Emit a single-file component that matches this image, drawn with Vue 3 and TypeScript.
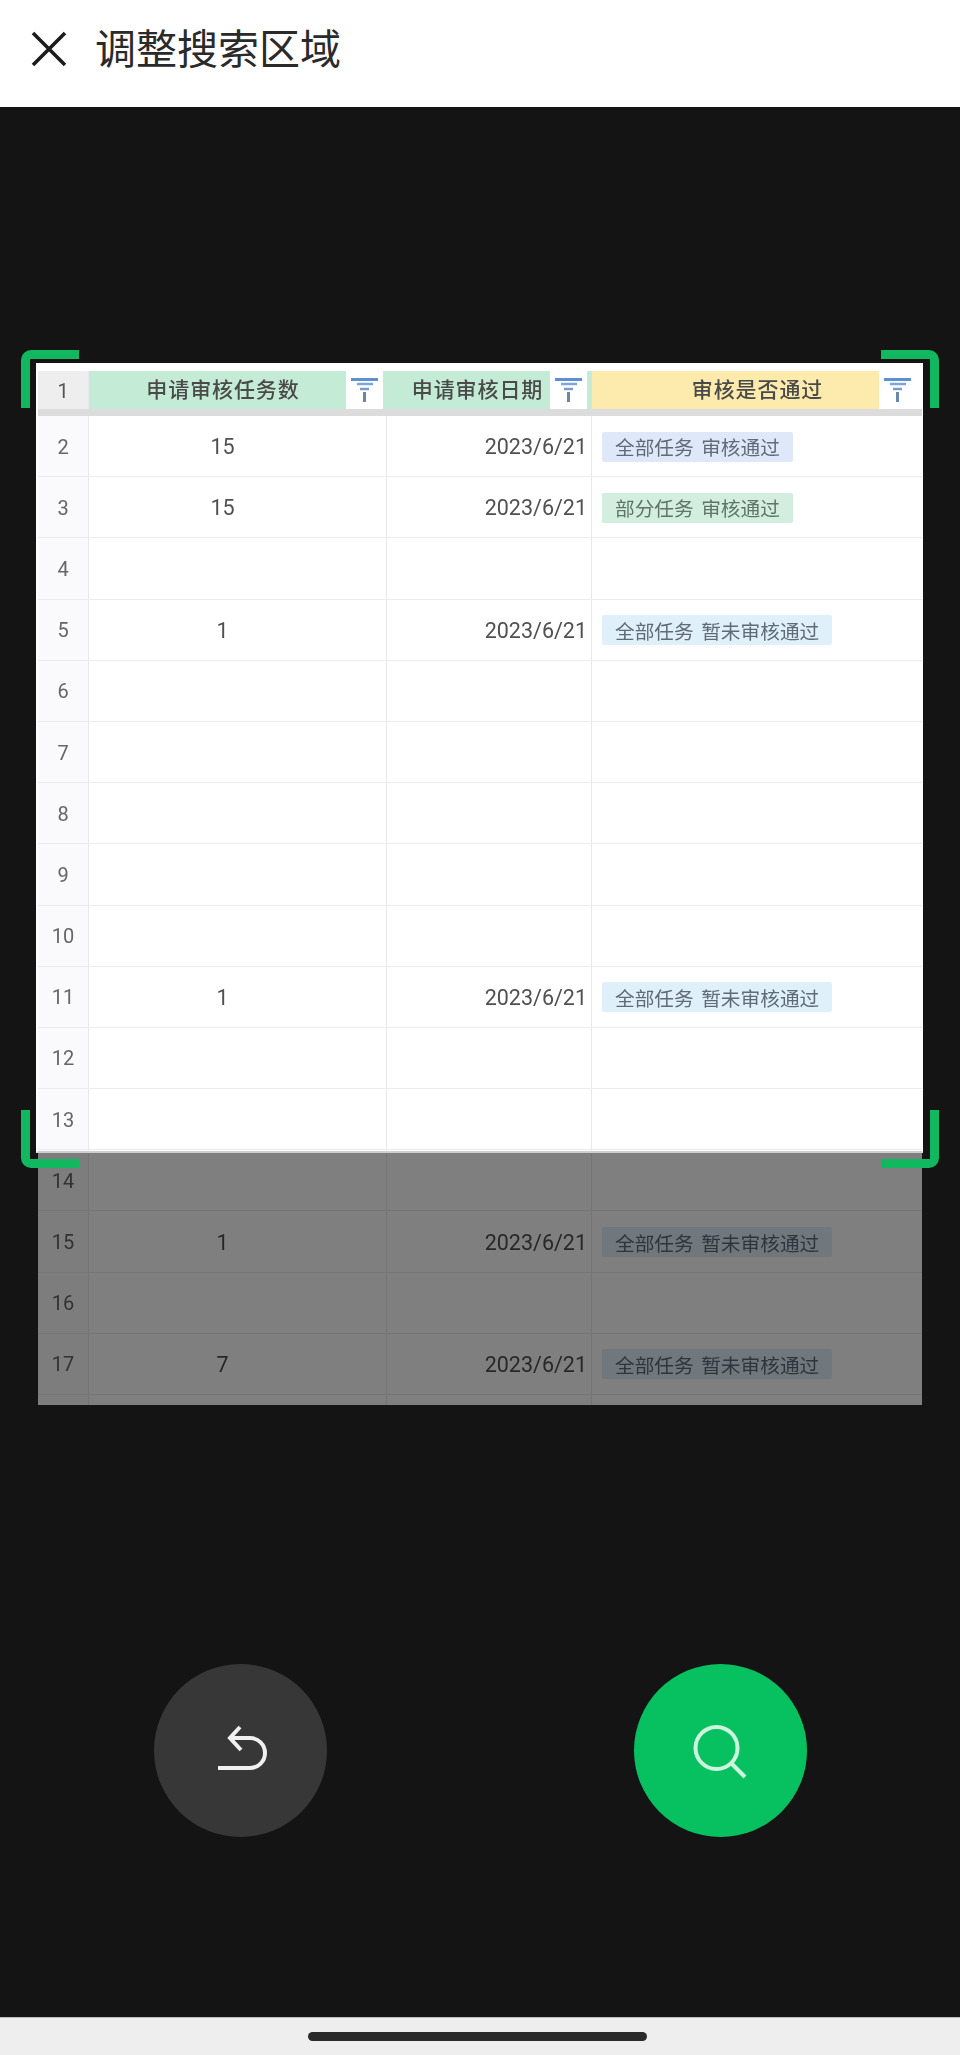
<template>
  <div class="screen">
    <header class="top-bar">
      <svg class="close-icon" width="36" height="36" viewBox="0 0 36 36">
        <path d="M2 2 L34 34 M34 2 L2 34" stroke="#1c1c1c" stroke-width="3.6" fill="none" />
      </svg>
      <span class="title">调整搜索区域</span>
    </header>

    <main class="stage">
      <div class="sheet-wrap">
        <div class="sheet">
          <div class="row head-row">
            <div class="num head-num">1</div>
            <div v-for="col in columns" :key="col.label" class="head-cell" :class="col.cls">
              <div class="head-label">{{ col.label }}</div>
              <div class="filter">
                <svg width="37" height="38" viewBox="0 0 37 38">
                  <path d="M5 8.5 H32" stroke="#5f8fd0" stroke-width="3" />
                  <path d="M11 13 H27" stroke="#7ba6de" stroke-width="2.5" />
                  <path d="M14 18 H23" stroke="#7f9cc4" stroke-width="2.5" />
                  <path d="M18.5 21 V31" stroke="#6a86a8" stroke-width="3" />
                </svg>
              </div>
            </div>
          </div>

          <div v-for="row in rows" :key="row.n" class="row body-row">
            <div class="num">{{ row.n }}</div>
            <div class="cell count">{{ row.count }}</div>
            <div class="cell date">{{ row.date }}</div>
            <div class="cell status">
              <span v-if="row.tag" class="tag" :class="row.tone">{{ row.tag }}</span>
            </div>
          </div>

          <div class="row tail-row">
            <div class="num"></div>
            <div class="cell"></div>
            <div class="cell"></div>
            <div class="cell"></div>
          </div>
        </div>

        <!-- darkened part of the picture, outside the crop -->
        <div class="dim"></div>
        <div class="lit-edge"></div>

        <!-- crop handles -->
        <i class="corner tl"></i>
        <i class="corner tr"></i>
        <i class="corner bl"></i>
        <i class="corner br"></i>
      </div>

      <div class="actions">
        <button class="round undo">
          <svg width="60" height="60" viewBox="0 0 60 60" fill="none" stroke="#f0f0f0" stroke-width="4">
            <path d="M8 47 H40 A15 15 0 0 0 40 17 H21" />
            <path d="M30 6 L20 17 L31 29" />
          </svg>
        </button>
        <button class="round search">
          <svg width="60" height="60" viewBox="0 0 60 60" fill="none" stroke="#cdf5dd" stroke-width="4">
            <circle cx="26.5" cy="27" r="21" />
            <path d="M41 42 L55 56" />
          </svg>
        </button>
      </div>
    </main>

    <footer class="nav-bar">
      <div class="pill"></div>
    </footer>
  </div>
</template>

<script setup lang="ts">
interface Row {
  n: number;
  count?: string;
  date?: string;
  tag?: string;
  tone?: string;
}

const columns = [
  { label: '申请审核任务数', cls: 'col-count' },
  { label: '申请审核日期', cls: 'col-date' },
  { label: '审核是否通过', cls: 'col-status' },
];

const pending = '全部任务 暂未审核通过';
const day = '2023/6/21';

const filled: Record<number, Omit<Row, 'n'>> = {
  2: { count: '15', date: day, tag: '全部任务 审核通过', tone: 'blue' },
  3: { count: '15', date: day, tag: '部分任务 审核通过', tone: 'green' },
  5: { count: '1', date: day, tag: pending, tone: 'sky' },
  11: { count: '1', date: day, tag: pending, tone: 'sky' },
  15: { count: '1', date: day, tag: pending, tone: 'sky' },
  17: { count: '7', date: day, tag: pending, tone: 'sky' },
};

const rows: Row[] = Array.from({ length: 16 }, (_, i) => ({ n: i + 2, ...filled[i + 2] }));
</script>

<style>
html,
body {
  margin: 0;
  background: #141414;
}
</style>

<style scoped>
.screen {
  width: 960px;
  height: 2055px;
  display: flex;
  flex-direction: column;
  overflow: hidden;
  font-family: Roboto, "Noto Sans CJK SC", sans-serif;
}

.top-bar {
  height: 107px;
  box-sizing: border-box;
  flex-shrink: 0;
  background: #fff;
  display: flex;
  align-items: center;
  padding-left: 31px;
  gap: 28px;
}

.close-icon {
  flex-shrink: 0;
  margin-top: -10px;
}

.title {
  font-family: "Noto Sans CJK SC", sans-serif;
  font-size: 41px;
  line-height: 1;
  color: #2a2a2a;
  margin-top: -14px;
}

.stage {
  flex: 1;
  background: #141414;
  padding-top: 257px;
  display: flex;
  flex-direction: column;
}

.sheet-wrap {
  position: relative;
  width: 884px;
  margin-left: 38px;
}

.sheet {
  background: #fff;
  height: 1041px;
  overflow: hidden;
  filter: blur(0.6px);
}

.row {
  display: grid;
  grid-template-columns: 51px 298px 205px 330px;
}

.head-row {
  height: 52px;
  box-sizing: border-box;
  padding-top: 7px;
  border-bottom: 7px solid #dcdcdc;
}

.num {
  background: #fafafc;
  border-right: 1px solid #e8e8ec;
  display: flex;
  align-items: center;
  justify-content: center;
  font-size: 20px;
  color: #666;
  padding-top: 1px;
}

.head-num {
  background: #eeeeee;
  color: #555;
}

.head-cell {
  display: flex;
  font-family: "Noto Sans CJK SC", sans-serif;
  font-size: 21px;
  font-weight: 500;
  letter-spacing: 0.9px;
  color: #4a4a4a;
}

.head-label {
  flex: 1;
  display: flex;
  align-items: center;
  justify-content: center;
  padding-bottom: 5px;
}

.col-count {
  background: #c4ebd6;
  padding-right: 4px;
}

.col-count .head-label {
  padding-left: 11px;
}

.col-date {
  background: #c4ebd6;
  padding-right: 5px;
}

.col-date .head-label {
  padding-left: 18px;
}

.col-status {
  background: #fdeaad;
}

.col-status .head-label {
  padding-left: 44px;
}

.col-status .filter {
  margin-right: 6px;
  box-shadow: 6px 0 0 #fff;
}

.filter {
  width: 37px;
  background: #fff;
  flex-shrink: 0;
}

.filter svg {
  display: block;
}

.body-row {
  height: 61.2px;
  box-sizing: border-box;
  border-bottom: 1px solid #ececef;
}

.tail-row {
  height: 10px;
}

.cell {
  border-right: 1px solid #e8e8ec;
  display: flex;
  align-items: center;
  font-size: 21.5px;
  color: #505050;
  padding-top: 1px;
}

.cell:last-child {
  border-right: none;
}

.count {
  justify-content: center;
  padding-right: 30px;
}

.date {
  justify-content: flex-end;
  padding-right: 4px;
}

.status {
  padding-left: 10px;
}

.tag {
  height: 30px;
  padding: 0 13px;
  border-radius: 2px;
  display: flex;
  align-items: center;
  font-family: "Noto Sans CJK SC", sans-serif;
  font-size: 19.7px;
  word-spacing: 3px;
  color: #5f6b78;
  white-space: nowrap;
}

.tag.blue {
  background: #dfe8f8;
}

.tag.green {
  background: #d3eedf;
  color: #5e7568;
}

.tag.sky {
  background: #e0f0fa;
}

.dim {
  position: absolute;
  left: 0;
  right: 0;
  top: 789px;
  bottom: 0;
  background: rgba(0, 0, 0, 0.5);
}

.lit-edge {
  position: absolute;
  left: -2px;
  right: -1px;
  top: -1px;
  height: 790px;
  box-sizing: border-box;
  border: solid #fff;
  border-width: 1px 1px 0 2px;
  border-bottom: 2px solid #cfcfcf;
}

.corner {
  position: absolute;
  width: 58px;
  height: 58px;
  box-sizing: border-box;
  border: 0 solid #12b85f;
}

.tl {
  left: -17px;
  top: -14px;
  border-width: 9px 0 0 9px;
  border-top-left-radius: 10px;
}

.tr {
  right: -17px;
  top: -14px;
  border-width: 9px 9px 0 0;
  border-top-right-radius: 10px;
}

.bl {
  left: -17px;
  top: 746px;
  border-width: 0 0 9px 9px;
  border-bottom-left-radius: 10px;
}

.br {
  right: -17px;
  top: 746px;
  border-width: 0 9px 9px 0;
  border-bottom-right-radius: 10px;
}

.actions {
  display: flex;
  justify-content: space-between;
  padding: 0 153.5px;
  margin-top: 259px;
}

.round {
  width: 173px;
  height: 173px;
  border: none;
  border-radius: 50%;
  padding: 0;
  display: flex;
  align-items: center;
  justify-content: center;
}

.undo {
  background: #373737;
}

.search {
  background: #07c160;
}

.nav-bar {
  height: 38px;
  flex-shrink: 0;
  background: #eeeeee;
  border-top: 1px solid #bbb;
  box-sizing: border-box;
  display: flex;
  justify-content: center;
  padding-top: 14px;
}

.pill {
  width: 339px;
  height: 9px;
  border-radius: 5px;
  background: #2a2a2a;
  margin-right: 6px;
}
</style>
